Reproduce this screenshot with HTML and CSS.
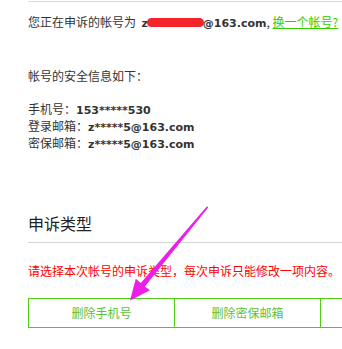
FILE: index.html
```html
<!DOCTYPE html>
<html lang="zh-CN">
<head>
<meta charset="utf-8">
<title>申诉</title>
<link rel="stylesheet" href="styles.css">
</head>
<body>
<div class="wrap">
  <div class="topline"></div>
  <p class="line account">您正在申诉的帐号为 &nbsp;<b class="email">z<span class="redact"></span>@163.com</b>, <a class="switch" href="#">换一个帐号?</a></p>
  <p class="line info-title">帐号的安全信息如下：</p>
  <ul class="info">
    <li class="line">手机号：<b>153*****530</b></li>
    <li class="line">登录邮箱：<b>z*****5@163.com</b></li>
    <li class="line">密保邮箱：<b>z*****5@163.com</b></li>
  </ul>
  <h2 class="heading">申诉类型</h2>
  <p class="line notice">请选择本次帐号的申诉类型，每次申诉只能修改一项内容。</p>
  <div class="types">
    <div class="type">删除手机号</div>
    <div class="type">删除密保邮箱</div>
    <div class="type"></div>
  </div>
</div>
<svg class="arrow" width="342" height="349" viewBox="0 0 342 349">
  <polygon points="207,206.3 208.2,207.4 144.9,286.4 150,290.3 130,300.5 135.8,278.8 140.8,283" fill="#ec1fe8"/>
</svg>
</body>
</html>
```

FILE: styles.css
```css
html, body {
  margin: 0;
  padding: 0;
  overflow: hidden;
  background: #fff;
}
body {
  width: 342px;
  height: 349px;
  position: relative;
  font-family: "Noto Sans CJK SC", "DejaVu Sans", sans-serif;
  font-size: 12px;
  color: #333;
  line-height: 17px;
}
.wrap {
  padding-left: 28px;
  width: 500px;
}
.topline {
  margin-top: 1px;
  border-top: 1px solid #dcdcdc;
}
p, ul, h2 {
  margin: 0;
  padding: 0;
}
.line {
  height: 17px;
  overflow: visible;
  white-space: nowrap;
}
.account {
  margin-top: 11px;
}
b {
  font-family: "DejaVu Sans", sans-serif;
  font-weight: bold;
  font-size: 11px;
  line-height: 11px;
}
.redact {
  display: inline-block;
  width: 55px;
  height: 10px;
  position: relative;
}
.redact::after {
  content: "";
  position: absolute;
  left: -1px;
  top: 1px;
  width: 57px;
  height: 9px;
  background: #f5232a;
  border-radius: 5px;
}
.switch {
  color: #33cc00;
  text-decoration: underline;
}
.info-title {
  margin-top: 37px;
}
.info {
  list-style: none;
  margin-top: 16px;
}
.heading {
  margin-top: 60px;
  font-size: 16px;
  font-weight: normal;
  line-height: 24px;
  height: 24px;
  color: #222;
  padding-bottom: 7px;
  border-bottom: 1px solid #d4d4d4;
}
.notice {
  margin-top: 19px;
  color: #f00;
}
.types {
  margin-top: 19px;
  display: flex;
}
.type {
  box-sizing: border-box;
  width: 147px;
  height: 30px;
  border: 1px solid #4ecb12;
  color: #5cc23a;
  text-align: center;
  line-height: 28px;
  flex: none;
}
.type + .type {
  margin-left: -1px;
}
.arrow {
  position: absolute;
  left: 0;
  top: 0;
  pointer-events: none;
}
```
